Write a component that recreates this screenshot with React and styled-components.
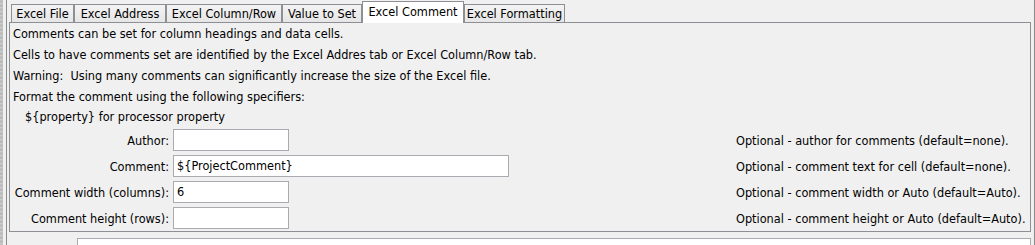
import React from "react";
import styled, { createGlobalStyle } from "styled-components";

const GlobalStyle = createGlobalStyle`
  html, body {
    margin: 0;
    padding: 0;
    background: #f0f0f0;
    overflow: hidden;
  }
  body {
    font-family: "DejaVu Sans Condensed", "DejaVu Sans", sans-serif;
    font-size: 12.6px;
    color: #000;
  }
`;

const Page = styled.div`
  display: flex;
  width: 1035px;
  height: 245px;
  overflow: hidden;
`;

const LeftStrip = styled.div`
  width: 3px;
  background: repeating-linear-gradient(
    180deg,
    #c4c4c4 0px,
    #b6b6b6 2px,
    #d2d2d2 4px
  );
  margin-right: 3px;
`;

const Frame = styled.div`
  width: 1025px;
  border-left: 1px solid #8a8a8a;
  border-right: 1px solid #8a8a8a;
  padding: 1px 3px 0 2px;
  display: flex;
  flex-direction: column;
`;

const TabRow = styled.div`
  display: flex;
  align-items: flex-start;
  height: 21px;
  padding-left: 2px;
`;

const Tab = styled.div`
  box-sizing: border-box;
  width: ${({ w }) => w}px;
  height: ${({ selected }) => (selected ? 22 : 18)}px;
  margin-top: ${({ selected }) => (selected ? 0 : 3)}px;
  border: 1px solid #8d8f94;
  border-bottom: none;
  background: ${({ selected }) =>
    selected ? "#ffffff" : "linear-gradient(180deg, #f3f3f3, #e6e6e6)"};
  display: flex;
  justify-content: center;
  align-items: ${({ selected }) => (selected ? "flex-start" : "center")};
  padding-top: ${({ selected }) => (selected ? 2 : 0)}px;
  position: relative;
  z-index: ${({ selected }) => (selected ? 1 : 0)};
  white-space: nowrap;
`;

const Panel = styled.div`
  box-sizing: border-box;
  height: 210px;
  border: 1px solid #8d8f94;
  padding: 0 3px 2px 3px;
  display: flex;
  flex-direction: column;
`;

const Line = styled.div`
  height: ${({ h }) => h || 21}px;
  line-height: ${({ h }) => h || 21}px;
  padding-left: ${({ indent }) => (indent ? 12 : 0)}px;
  white-space: nowrap;
`;

const Form = styled.div`
  display: grid;
  grid-template-columns: 156px 559px auto;
  grid-auto-rows: 22px;
  column-gap: 4px;
  row-gap: 4px;
  margin-top: 3px;
  align-items: center;
`;

const Label = styled.div`
  text-align: right;
  white-space: nowrap;
`;

const Field = styled.div`
  box-sizing: border-box;
  width: ${({ w }) => w}px;
  height: 22px;
  border: 1px solid #a9abb0;
  background: #fff;
  padding-left: 3px;
  line-height: 20px;
  white-space: nowrap;
`;

const Hint = styled.div`
  white-space: nowrap;
`;

const BottomRow = styled.div`
  margin-top: 6px;
  padding-left: 68px;
`;

const BottomField = styled.div`
  height: 20px;
  border: 1px solid #a9abb0;
  border-bottom: none;
  background: #fff;
`;

const tabs = [
  { label: "Excel File", w: 63 },
  { label: "Excel Address", w: 92 },
  { label: "Excel Column/Row", w: 116 },
  { label: "Value to Set", w: 80 },
  { label: "Excel Comment", w: 102, selected: true },
  { label: "Excel Formatting", w: 101 },
];

const rows = [
  { label: "Author:", value: "", w: 116, hint: "Optional - author for comments (default=none)." },
  { label: "Comment:", value: "${ProjectComment}", w: 336, hint: "Optional - comment text for cell (default=none)." },
  { label: "Comment width (columns):", value: "6", w: 116, hint: "Optional - comment width or Auto (default=Auto)." },
  { label: "Comment height (rows):", value: "", w: 116, hint: "Optional - comment height or Auto (default=Auto)." },
];

const App = () => {
  return (
    <Page>
      <GlobalStyle />
      <LeftStrip />
      <Frame>
        <TabRow>
          {tabs.map((t) => (
            <Tab key={t.label} w={t.w} selected={t.selected}>
              {t.label}
            </Tab>
          ))}
        </TabRow>
        <Panel>
          <Line>Comments can be set for column headings and data cells.</Line>
          <Line>Cells to have comments set are identified by the Excel Addres tab or Excel Column/Row tab.</Line>
          <Line>Warning:&nbsp; Using many comments can significantly increase the size of the Excel file.</Line>
          <Line>Format the comment using the following specifiers:</Line>
          <Line h={19} indent>
            {"${property} for processor property"}
          </Line>
          <Form>
            {rows.map((r) => (
              <React.Fragment key={r.label}>
                <Label>{r.label}</Label>
                <Field w={r.w}>{r.value}</Field>
                <Hint>{r.hint}</Hint>
              </React.Fragment>
            ))}
          </Form>
        </Panel>
        <BottomRow>
          <BottomField />
        </BottomRow>
      </Frame>
    </Page>
  );
};

export default App;
